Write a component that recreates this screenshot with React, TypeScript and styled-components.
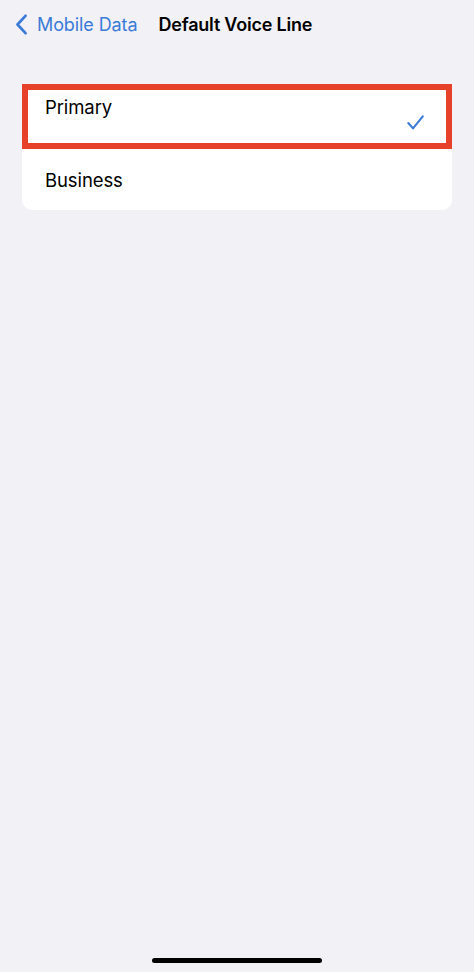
import React from "react";
import styled, { createGlobalStyle } from "styled-components";

const GlobalStyle = createGlobalStyle`
  body {
    margin: 0;
    background: #f2f1f6;
    font-family: Inter, "Noto Sans", sans-serif;
    -webkit-font-smoothing: antialiased;
  }
`;

const lines = [
  { name: "Primary", selected: true },
  { name: "Business", selected: false },
];

const App = () => {
  return (
    <>
      <GlobalStyle />
      <Screen>
        <NavBar>
          <BackButton>
            <svg width="13" height="21" viewBox="0 0 13 21">
              <path
                d="M10.5 1.8 L2.5 10.5 L10.5 19.2"
                fill="none"
                stroke="currentColor"
                strokeWidth="2.7"
                strokeLinecap="round"
                strokeLinejoin="round"
              />
            </svg>
            <span>Mobile Data</span>
          </BackButton>
          <Title>Default Voice Line</Title>
        </NavBar>

        <Card>
          {lines.map((line) =>
            line.selected ? (
              <HighlightRow key={line.name}>
                <RowLabel>{line.name}</RowLabel>
                <Check width="17" height="15" viewBox="0 0 17 15">
                  <path
                    d="M1.3 8 L6 13.4 L15.8 1.4"
                    fill="none"
                    stroke="currentColor"
                    strokeWidth="2.1"
                    strokeLinecap="round"
                    strokeLinejoin="round"
                  />
                </Check>
              </HighlightRow>
            ) : (
              <Row key={line.name}>
                <RowLabel>{line.name}</RowLabel>
              </Row>
            )
          )}
        </Card>

        <HomeIndicator />
      </Screen>
    </>
  );
};

export default App;

const Screen = styled.div`
  height: 972px;
  display: flex;
  flex-direction: column;
  background: #f2f1f6;
`;

const NavBar = styled.div`
  height: 48px;
  display: flex;
  align-items: center;
  padding-left: 15px;
`;

const BackButton = styled.div`
  display: flex;
  align-items: center;
  gap: 9px;
  color: #3a7bd8;
  font-size: 18px;
  letter-spacing: -0.1px;
`;

const Title = styled.div`
  margin-left: 21px;
  font-size: 18px;
  font-weight: 600;
  color: #000;
  letter-spacing: -0.2px;
`;

const Card = styled.div`
  margin: 36px 22px 0;
  background: #fff;
  border-radius: 10px;
`;

const Row = styled.div`
  height: 61px;
  display: flex;
  align-items: center;
  padding: 0 22px 0 23px;
`;

const HighlightRow = styled.div`
  height: 65px;
  box-sizing: border-box;
  display: flex;
  align-items: flex-start;
  justify-content: space-between;
  padding: 6px 22px 0 17px;
  border: 6px solid #e8412a;
`;

const RowLabel = styled.span`
  font-size: 18.5px;
  line-height: 22px;
  color: #000;
  letter-spacing: -0.1px;
`;

const Check = styled.svg`
  align-self: center;
  margin-top: 5px;
  color: #3a7bd8;
`;

const HomeIndicator = styled.div`
  margin: auto auto 9px;
  width: 170px;
  height: 5px;
  border-radius: 3px;
  background: #000;
`;
